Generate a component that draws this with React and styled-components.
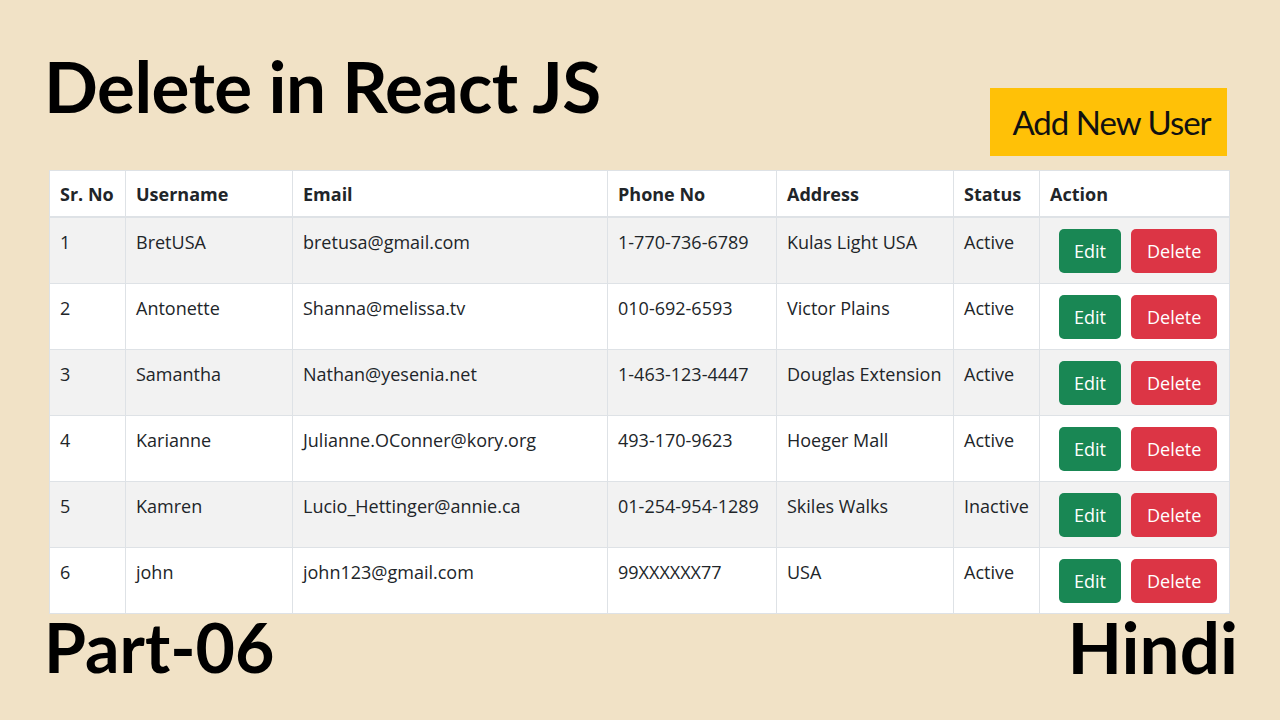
import React from 'react'
import styled, { createGlobalStyle } from 'styled-components'

const GlobalStyle = createGlobalStyle`
  body {
    margin: 0;
    background: #f1e2c6;
    font-family: "Open Sans", "Noto Sans", sans-serif;
  }
`

const Page = styled.div`
  width: 1280px;
  height: 720px;
  box-sizing: border-box;
  padding: 46px 51px 0 49px;
  display: flex;
  flex-direction: column;
  overflow: hidden;
`

const Header = styled.div`
  display: flex;
  justify-content: space-between;
  align-items: flex-start;
  height: 110px;
  margin-left: -5px;
  margin-right: 2px;
`

const Title = styled.h1`
  margin: 0;
  font-family: "Lato", sans-serif;
  font-weight: 700;
  font-size: 71px;
  line-height: 80px;
  color: #000;
  letter-spacing: -0.5px;
`

const AddButton = styled.button`
  margin-top: 42px;
  width: 237px;
  height: 68px;
  border: none;
  background: #ffc107;
  color: #111;
  font-family: "Lato", sans-serif;
  font-size: 33px;
  letter-spacing: -1px;
  padding: 0 0 0 6px;
`

const Table = styled.table`
  width: 1180px;
  margin-top: 14px;
  border-collapse: collapse;
  table-layout: fixed;
  background: #fff;
  font-size: 18px;
  color: #212529;
`

const Th = styled.th`
  border: 1px solid #dee2e6;
  border-bottom-width: 2px;
  text-align: left;
  font-weight: 700;
  padding: 0 10px;
  height: 45px;
  vertical-align: middle;
`

const Row = styled.tr`
  background: ${p => (p.$striped ? '#f2f2f2' : '#fff')};
`

const Td = styled.td`
  border: 1px solid #dee2e6;
  padding: 12px 10px 13px;
  height: 40px;
  vertical-align: top;
  white-space: nowrap;
  line-height: 25px;
`

const ActionCell = styled(Td)`
  padding: 11px 10px 10px 19px;
`

const Actions = styled.div`
  display: flex;
  gap: 10px;
`

const Btn = styled.button`
  height: 44px;
  border: none;
  border-radius: 5px;
  color: #fff;
  font-family: "Open Sans", sans-serif;
  font-size: 18px;
  padding: 0 ${p => (p.$wide ? 16 : 15)}px;
  background: ${p => (p.$variant === 'danger' ? '#dc3545' : '#198754')};
`

const Footer = styled.div`
  display: flex;
  justify-content: space-between;
  margin-left: -5px;
  margin-right: -9px;
  margin-top: -3px;
`

const Big = styled.div`
  font-family: "Lato", sans-serif;
  font-weight: 700;
  font-size: ${p => (p.$size ? p.$size : 68)}px;
  line-height: 72px;
  color: #000;
`

const users = [
  { id: 1, name: 'BretUSA', email: 'bretusa@gmail.com', phone: '1-770-736-6789', address: 'Kulas Light USA', status: 'Active' },
  { id: 2, name: 'Antonette', email: 'Shanna@melissa.tv', phone: '010-692-6593', address: 'Victor Plains', status: 'Active' },
  { id: 3, name: 'Samantha', email: 'Nathan@yesenia.net', phone: '1-463-123-4447', address: 'Douglas Extension', status: 'Active' },
  { id: 4, name: 'Karianne', email: 'Julianne.OConner@kory.org', phone: '493-170-9623', address: 'Hoeger Mall', status: 'Active' },
  { id: 5, name: 'Kamren', email: 'Lucio_Hettinger@annie.ca', phone: '01-254-954-1289', address: 'Skiles Walks', status: 'Inactive' },
  { id: 6, name: 'john', email: 'john123@gmail.com', phone: '99XXXXXX77', address: 'USA', status: 'Active' },
]

const widths = [76, 167, 315, 169, 177, 86, 190]

export default function App() {
  return (
    <Page>
      <GlobalStyle />
      <Header>
        <Title>Delete in React JS</Title>
        <AddButton>Add New User</AddButton>
      </Header>
      <Table>
        <colgroup>
          {widths.map((w, i) => <col key={i} style={{ width: w }} />)}
        </colgroup>
        <thead>
          <tr>
            <Th>Sr. No</Th>
            <Th>Username</Th>
            <Th>Email</Th>
            <Th>Phone No</Th>
            <Th>Address</Th>
            <Th>Status</Th>
            <Th>Action</Th>
          </tr>
        </thead>
        <tbody>
          {users.map((u, i) => (
            <Row key={u.id} $striped={i % 2 === 0}>
              <Td>{u.id}</Td>
              <Td>{u.name}</Td>
              <Td>{u.email}</Td>
              <Td>{u.phone}</Td>
              <Td>{u.address}</Td>
              <Td>{u.status}</Td>
              <ActionCell>
                <Actions>
                  <Btn>Edit</Btn>
                  <Btn $variant="danger" $wide>Delete</Btn>
                </Actions>
              </ActionCell>
            </Row>
          ))}
        </tbody>
      </Table>
      <Footer>
        <Big>Part-06</Big>
        <Big $size={71}>Hindi</Big>
      </Footer>
    </Page>
  )
}
